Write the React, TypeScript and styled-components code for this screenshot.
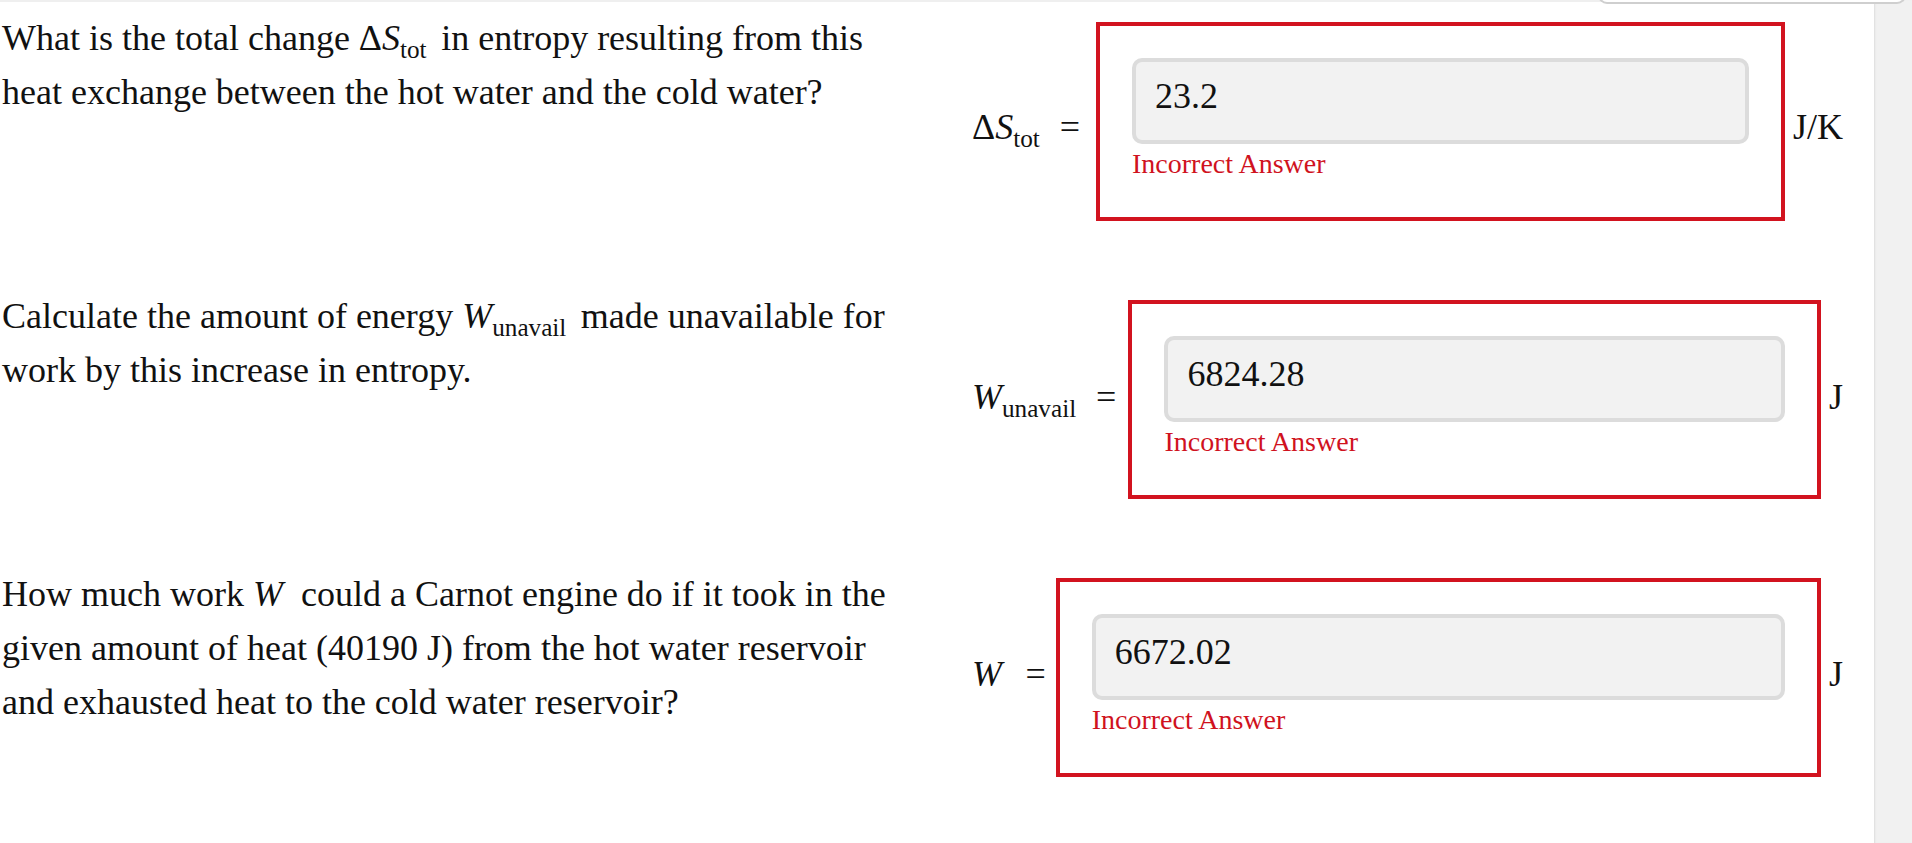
import React from "react";
import styled, { createGlobalStyle } from "styled-components";

const GlobalStyle = createGlobalStyle`
  html, body {
    margin: 0;
    padding: 0;
    background: #ffffff;
    overflow: hidden;
  }
  body {
    font-family: "Liberation Serif", "Times New Roman", serif;
    color: #111111;
  }
`;

const Page = styled.div`
  position: relative;
  display: flex;
  width: 1912px;
  height: 843px;
  overflow: hidden;
  background: #ffffff;
`;

const TopStrip = styled.div`
  position: absolute;
  left: 0;
  top: 0;
  width: 1874px;
  height: 2px;
  background: #efefef;
`;

const TopMenuEdge = styled.div`
  position: absolute;
  left: 1598px;
  top: -20px;
  width: 304px;
  height: 22px;
  background: #ffffff;
  border: 2px solid #cfcfcf;
  border-top: none;
  border-radius: 0 0 9px 9px;
`;

const Content = styled.main`
  flex: 1;
  display: flex;
  flex-direction: column;
  gap: 65px;
  padding: 8px 0 0 2px;
`;

const QuestionRow = styled.section`
  display: grid;
  grid-template-columns: 970px 871px;
  align-items: start;
`;

const Question = styled.p`
  margin: 3px 0 0 0;
  font-size: 36px;
  line-height: 54px;
  white-space: nowrap;
`;

const MathVar = styled.i`
  font-family: "Liberation Serif", "Times New Roman", serif;
  font-style: italic;
`;

const MathSub = styled.span`
  font-family: "Liberation Serif", "Times New Roman", serif;
  font-size: 0.7em;
  position: relative;
  top: 0.3em;
  line-height: 0;
  margin-right: 0.22em;
`;

const AnswerLine = styled.div<{ $shift: number }>`
  display: flex;
  align-items: center;
  margin-top: 14px;
  & > .label,
  & > .unit {
    position: relative;
    top: ${(p) => p.$shift}px;
  }
`;

const Label = styled.div<{ $gap: number }>`
  font-size: 36px;
  line-height: 41px;
  white-space: nowrap;
  margin-right: ${(p) => p.$gap}px;
`;

const Equals = styled.span`
  margin-left: 0.4em;
`;

const AnswerBox = styled.div`
  flex: 1;
  box-sizing: border-box;
  height: 199px;
  border: 4px solid #d2131f;
  padding: 32px 32px 0 32px;
  display: flex;
  flex-direction: column;
`;

const ValueInput = styled.input`
  box-sizing: border-box;
  width: 100%;
  height: 86px;
  margin: 0;
  border: 4px solid #dcdcdc;
  border-radius: 10px;
  background: #f2f2f2;
  padding: 0 19px 11px 19px;
  font-family: "Liberation Serif", "Times New Roman", serif;
  font-size: 36px;
  color: #111111;
  outline: none;
`;

const Feedback = styled.div`
  margin-top: 4px;
  font-size: 28px;
  line-height: 32px;
  color: #d0121e;
`;

const Unit = styled.div`
  margin-left: 8px;
  font-size: 36px;
  line-height: 41px;
  white-space: nowrap;
`;

const ScrollTrack = styled.div`
  width: 37px;
  height: 100%;
  background: #f1f1f1;
  border-left: 1px solid #e2e2e2;
  box-shadow: inset 1px 0 1px #ececec;
`;

type Row = {
  question: React.ReactNode;
  label: React.ReactNode;
  labelGap: number;
  value: string;
  unit: string;
  shift: number;
};

const rows: Row[] = [
  {
    question: (
      <>
        What is the total change Δ<MathVar>S</MathVar>
        <MathSub>tot</MathSub> in entropy resulting from this
        <br />
        heat exchange between the hot water and the cold water?
      </>
    ),
    label: (
      <>
        Δ<MathVar>S</MathVar>
        <MathSub>tot</MathSub>
        <Equals>=</Equals>
      </>
    ),
    labelGap: 16,
    value: "23.2",
    unit: "J/K",
    shift: 6,
  },
  {
    question: (
      <>
        Calculate the amount of energy <MathVar>W</MathVar>
        <MathSub>unavail</MathSub> made unavailable for
        <br />
        work by this increase in entropy.
      </>
    ),
    label: (
      <>
        <MathVar>W</MathVar>
        <MathSub>unavail</MathSub>
        <Equals>=</Equals>
      </>
    ),
    labelGap: 12,
    value: "6824.28",
    unit: "J",
    shift: -2,
  },
  {
    question: (
      <>
        How much work <MathVar>W</MathVar>&nbsp; could a Carnot engine do if it took in the
        <br />
        given amount of heat (40190 J) from the hot water reservoir
        <br />
        and exhausted heat to the cold water reservoir?
      </>
    ),
    label: (
      <>
        <MathVar>W</MathVar>
        <Equals>&nbsp;=</Equals>
      </>
    ),
    labelGap: 10,
    value: "6672.02",
    unit: "J",
    shift: -3,
  },
];

export default function App() {
  return (
    <>
      <GlobalStyle />
      <Page>
        <TopStrip />
        <TopMenuEdge />
        <Content>
          {rows.map((r, i) => (
            <QuestionRow key={i}>
              <Question>{r.question}</Question>
              <AnswerLine $shift={r.shift}>
                <Label className="label" $gap={r.labelGap}>
                  {r.label}
                </Label>
                <AnswerBox>
                  <ValueInput readOnly value={r.value} />
                  <Feedback>Incorrect Answer</Feedback>
                </AnswerBox>
                <Unit className="unit">{r.unit}</Unit>
              </AnswerLine>
            </QuestionRow>
          ))}
        </Content>
        <ScrollTrack />
      </Page>
    </>
  );
}
